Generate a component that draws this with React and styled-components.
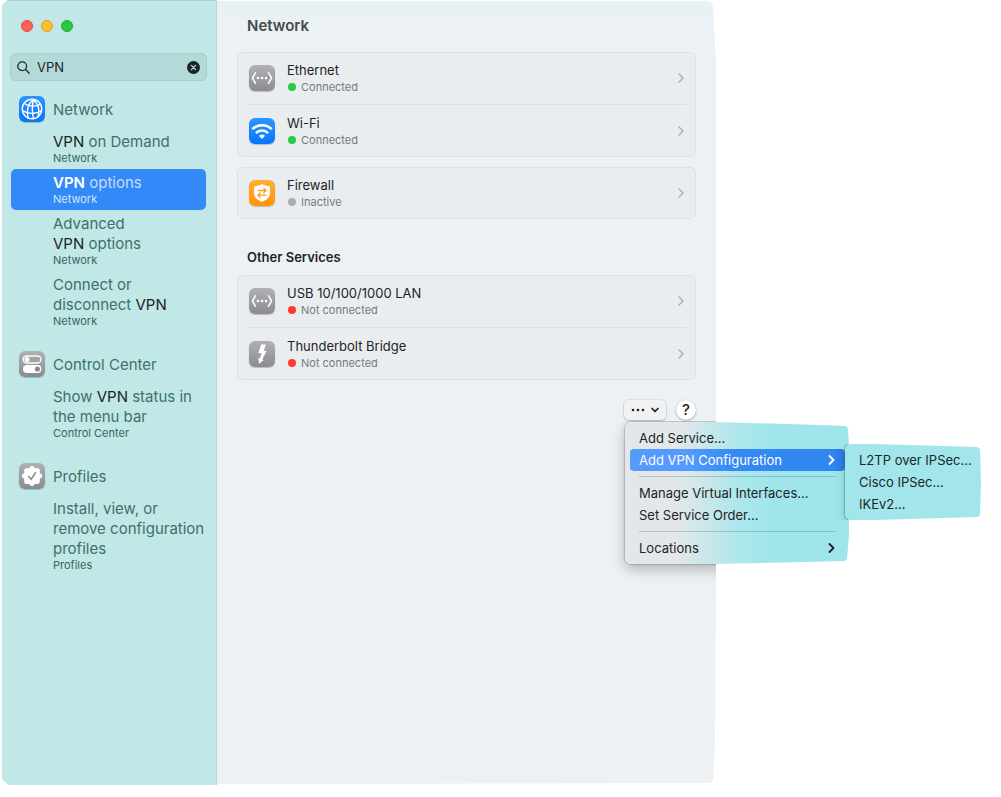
import React from "react";
import styled, { createGlobalStyle, css } from "styled-components";

const GlobalStyle = createGlobalStyle`
  *, *::before, *::after { box-sizing: border-box; }
  body {
    margin: 0;
    background: #fff;
    font-family: Inter, "Liberation Sans", sans-serif;
    font-size: 13px;
    color: #1f2325;
  }
  button, input { font: inherit; color: inherit; margin: 0; }
  ul { list-style: none; margin: 0; padding: 0; }
  h1, h2, p { margin: 0; }
`;

const Page = styled.div`
  padding: 0 284px 12px 2px;
`;

const Window = styled.div`
  display: grid;
  grid-template-columns: 215px minmax(0, 1fr);
  min-height: calc(100vh - 12px);
`;

const Sidebar = styled.aside`
  padding: 19px 10px 20px 8px;
  background: linear-gradient(#a9d3d6, #a9d3d6) 0 0 / 100% 1px no-repeat, #c1e8e6;
  box-shadow: inset -1px 0 0 #b1dcd9;
  clip-path: polygon(0 5px, 6px 0, 100% 0, 100% 100%, 6px 100%, 0 calc(100% - 6px));
`;

const Lights = styled.div`
  display: flex;
  gap: 8px;
  padding: 1px 11px 0;
`;

const Light = styled.button`
  width: 12px;
  height: 12px;
  padding: 0;
  border: 1px solid ${(p) => p.$edge};
  border-radius: 50%;
  background: ${(p) => p.$fill};
`;

const SearchBox = styled.label`
  display: flex;
  align-items: center;
  gap: 7px;
  height: 28px;
  margin: 21px 0 9px;
  padding: 0 6px;
  border: 1px solid #a6cecc;
  border-radius: 6px;
  background: #b3dad9;
`;

const SearchInput = styled.input`
  flex: 1;
  min-width: 0;
  padding: 0;
  border: 0;
  outline: 0;
  background: transparent;
`;

const ClearButton = styled.button`
  display: flex;
  padding: 0;
  border: 0;
  background: transparent;
`;

const Group = styled.section`
  & + & { margin-top: 13px; }
`;

const GroupTitle = styled.h2`
  display: flex;
  align-items: center;
  gap: 8px;
  height: 38px;
  padding-left: 9px;
  font-size: 15px;
  font-weight: 400;
  color: #40706b;
`;

const Result = styled.a`
  display: block;
  margin: 0 1px;
  padding: 4px 0 4px 42px;
  border-radius: 5px;
  font-size: 15px;
  line-height: 20px;
  white-space: nowrap;
  text-decoration: none;
  color: ${(p) => (p.$selected ? "#c7defc" : "#40706b")};
  background: ${(p) => (p.$selected ? "#3389f7" : "transparent")};
`;

const Match = styled.b`
  font-weight: ${(p) => (p.$selected ? 600 : 400)};
  color: ${(p) => (p.$selected ? "#fff" : "#1b2424")};
`;

const ResultPlace = styled.span`
  display: block;
  font-size: 11px;
  line-height: 13px;
  color: ${(p) => (p.$selected ? "#d3e5fd" : "#356661")};
`;

const Tile = styled.span`
  display: block;
  flex: none;
  width: 26px;
  height: 26px;
  border-radius: 6px;
  box-shadow: 0 1px 1px rgba(0, 0, 0, 0.2);
  background: ${(p) =>
    ({
      grey: "linear-gradient(#b1b0b5, #8c8b90)",
      blue: "linear-gradient(#2e95ff, #0577fb)",
      orange: "linear-gradient(#ffb031, #ff9404)",
    })[p.$tone]};
  svg { display: block; }
`;

const Main = styled.main`
  position: relative;
  isolation: isolate;
  padding: 0 21px 40px 20px;
  &::before {
    content: "";
    position: absolute;
    z-index: -1;
    inset: 0;
    background: linear-gradient(#e9f1f4, #edf1f4 60px);
    clip-path: polygon(
      0 1px, calc(100% - 9px) 1px, calc(100% - 5px) 3px, calc(100% - 4px) 8px,
      calc(100% - 1px) 60px, calc(100% - 1px) 75%, calc(100% - 2px) calc(100% - 40px),
      calc(100% - 4px) calc(100% - 4px), calc(100% - 8px) calc(100% - 2px), 0 calc(100% - 1px)
    );
  }
`;

const Title = styled.h1`
  padding: 0 10px;
  font-size: 15px;
  line-height: 52px;
  font-weight: 600;
  color: #45484a;
`;

const Subtitle = styled.h2`
  padding: 0 10px;
  margin: 28px 0 8px;
  font-size: 13px;
  line-height: 20px;
  font-weight: 600;
`;

const Card = styled.ul`
  padding: 0 9px;
  border: 1px solid #dce1e4;
  border-radius: 6px;
  background: #e9edf0;
  & + & { margin-top: 10px; }
`;

const CardItem = styled.li`
  & + &::before {
    content: "";
    display: block;
    height: 1px;
    margin: 1px 0;
    background: #dadfe2;
  }
`;

const ServiceButton = styled.button`
  display: flex;
  align-items: center;
  gap: 12px;
  width: 100%;
  height: 50px;
  padding: 0 0 0 2px;
  border: 0;
  background: transparent;
  text-align: left;
`;

const ServiceText = styled.span`
  display: flex;
  flex: 1;
  flex-direction: column;
  line-height: 17px;
`;

const Status = styled.span`
  display: flex;
  align-items: center;
  gap: 5px;
  padding-left: 1px;
  font-size: 11px;
  line-height: 16px;
  color: #757a7d;
  &::before {
    content: "";
    width: 8px;
    height: 8px;
    border-radius: 50%;
    background: ${(p) => ({ on: "#29cc41", idle: "#a9adb0", off: "#ff3b2f" })[p.$state]};
  }
`;

const Actions = styled.div`
  display: flex;
  justify-content: flex-end;
  gap: 10px;
  margin-top: 20px;
`;

const MenuAnchor = styled.div`
  position: relative;
`;

const MoreButton = styled.button`
  display: flex;
  align-items: center;
  justify-content: center;
  gap: 6px;
  width: 42px;
  height: 20px;
  padding: 0;
  border: 0;
  border-radius: 5px;
  background: #f1f2f3;
  box-shadow: 0 0 0 1px rgba(0, 0, 0, 0.06), 0 1px 2px rgba(0, 0, 0, 0.2);
`;

const HelpButton = styled.button`
  width: 20px;
  height: 20px;
  padding: 0;
  border: 0;
  border-radius: 50%;
  background: #fff;
  box-shadow: 0 0 1px rgba(0, 0, 0, 0.3), 0 1px 2px rgba(0, 0, 0, 0.25);
  font-size: 15px;
  line-height: 20px;
  font-weight: 500;
`;

const menuSurface = css`
  position: absolute;
  z-index: 1;
  padding: 5px;
  &::before {
    content: "";
    position: absolute;
    z-index: -1;
    inset: 0;
    border-radius: 6px;
  }
`;

const Menu = styled.ul`
  ${menuSurface}
  top: 22px;
  left: 1px;
  width: 225px;
  &::before {
    background: linear-gradient(90deg, #e3e7e9 0, #e3e7e9 52px, #a9e7eb 118px, #a0e5eb 150px, #a0e5eb);
    clip-path: polygon(
      0 0, 91px 0, calc(100% - 30px) 3px, calc(100% - 4px) 4px, calc(100% - 2px) 6px, calc(100% - 1px) 24px,
      calc(100% - 1px) 112px, calc(100% - 3px) calc(100% - 5px), calc(100% - 5px) calc(100% - 3px), 91px 100%, 0 100%
    );
  }
  &::after {
    content: "";
    position: absolute;
    z-index: -2;
    inset: 0;
    border-radius: 6px;
    box-shadow: 0 0 1px 1px rgba(0, 0, 0, 0.16), 0 5px 14px rgba(0, 0, 0, 0.26);
    clip-path: inset(-1px calc(100% - 91px) -30px -30px);
  }
`;

const Submenu = styled.ul`
  ${menuSurface}
  top: -5px;
  left: 100%;
  width: 136px;
  color: #1b2628;
  &::before {
    background: #a2e6eb;
    clip-path: polygon(
      0 0, 30px 0, calc(100% - 4px) 3px, calc(100% - 1px) 5px, 100% 50%,
      calc(100% - 1px) calc(100% - 5px), calc(100% - 3px) calc(100% - 3px), 30px 100%, 0 100%
    );
  }
  &::after {
    content: "";
    position: absolute;
    z-index: -2;
    inset: 0;
    border-radius: 6px;
    box-shadow: 0 0 1px 1px rgba(20, 90, 100, 0.3), 0 3px 10px rgba(20, 90, 100, 0.3);
    clip-path: inset(0 calc(100% - 4px) 0 -12px);
  }
`;

const MenuEntry = styled.li`
  position: relative;
`;

const MenuButton = styled.button`
  display: flex;
  align-items: center;
  justify-content: space-between;
  width: 100%;
  height: 22px;
  padding: 0 9px;
  border: 0;
  border-radius: 4px;
  text-align: left;
  white-space: nowrap;
  color: ${(p) => (p.$active ? "#fff" : "inherit")};
  background: ${(p) =>
    p.$active ? "linear-gradient(90deg, #559bff 0, #559bff 55px, #3489f5 105px, #3187f0 200px, #2c78e2)" : "transparent"};
`;

const MenuLine = styled.li`
  height: 1px;
  margin: 5px 9px;
  background: rgba(60, 90, 100, 0.25);
`;

const Stroke = ({ size = 26, width = 2, box = 26, color = "#fff", children }) => (
  <svg
    width={size} height={size} viewBox={`0 0 ${box} ${box}`} fill="none" stroke={color}
    strokeWidth={width} strokeLinecap="round" strokeLinejoin="round" aria-hidden="true"
  >
    {children}
  </svg>
);

const sealLobes = Array.from({ length: 8 }, (_, i) => i * 45);

const icons = {
  globe: (
    <Stroke width={1.4}>
      <circle cx="13" cy="13" r="9.8" />
      <path d="M14.500 3.500C9 7.500 7 15 9.200 22M14.500 3.500C13 10 13 17 14.500 22.700M14.500 3.500C19.500 8 21 15 18.800 21" />
      <path d="M5.200 7.500c4.600 3.200 11.600 3.600 16 .6M3.400 14.300c5.400 4.200 13.600 4.200 19.200 0" />
    </Stroke>
  ),
  switches: (
    <Stroke width={1.3}>
      <rect x="4.2" y="5" width="17.8" height="7" rx="3.5" fill="#a3a2a7" />
      <circle cx="8" cy="8.5" r="2.5" fill="#fff" stroke="none" />
      <rect x="4" y="14" width="18.4" height="8" rx="4" fill="#fff" stroke="none" />
      <circle cx="18.4" cy="18" r="2.6" fill="#8c8b90" stroke="none" />
    </Stroke>
  ),
  seal: (
    <Stroke width={1.6}>
      <g fill="#fff" stroke="none">
        <circle cx="13" cy="13" r="8.6" />
        {sealLobes.map((angle) => (
          <circle key={angle} cx="13" cy="5.400" r="2.500" transform={`rotate(${angle} 13 13)`} />
        ))}
      </g>
      <path d="M9.700 13.400l2.500 2.900 4.200-6.500" stroke="#8e8d92" />
    </Stroke>
  ),
  ethernet: (
    <Stroke width={1.5}>
      <path d="M6.600 7.700L3.400 13l3.200 5.300M19.400 7.700l3.200 5.300-3.200 5.300" />
      <g fill="#fff" stroke="none">
        <circle cx="8.900" cy="13" r="1.300" />
        <circle cx="13" cy="13" r="1.300" />
        <circle cx="17.100" cy="13" r="1.300" />
      </g>
    </Stroke>
  ),
  wifi: (
    <Stroke width={2.5}>
      <g strokeLinecap="butt">
        <path d="M3.200 11.200a14 14 0 0 1 19.600 0M6.900 15.100a8.700 8.700 0 0 1 12.200 0" />
      </g>
      <path d="M10 17.800a4.400 4.400 0 0 1 6 0l-3 3.100z" fill="#fff" stroke="none" />
    </Stroke>
  ),
  shield: (
    <Stroke width={1.3}>
      <path
        d="M13 4c2.400 1.400 4.700 2 7 2.200.6.1.9.4.9 1v6.600c0 3.800-3.500 6-7.900 8.200-4.400-2.200-7.900-4.400-7.900-8.200V7.200c0-.6.300-.9.900-1C8.300 6 10.600 5.400 13 4z"
        fill="#fff" stroke="none"
      />
      <path d="M9 10.500h8M14.800 8.300l2.200 2.200-2.200 2.200M17 15.200H9M11.200 13L9 15.200l2.200 2.200" stroke="#ff9d18" />
    </Stroke>
  ),
  bolt: (
    <Stroke width={1}>
      <path
        d="M12.200 3.500h4.600l-2 6.300h2.800l-4.300 8.600 1.400.6-4.600 3.800-.9-5.800 1.500.6 2-5.300H9.300z"
        fill="#fff" stroke="none"
      />
    </Stroke>
  ),
};

const AppIcon = ({ tone, name }) => <Tile $tone={tone}>{icons[name]}</Tile>;

const RowChevron = () => (
  <Stroke size={10} box={10} width={1.4} color="#a8adb0">
    <path d="M3 1l4 4-4 4" />
  </Stroke>
);

const MenuChevron = ({ color = "#1f2325" }) => (
  <Stroke size={10} box={10} width={1.8} color={color}>
    <path d="M3.500 1l4 4-4 4" />
  </Stroke>
);

const groups = [
  {
    title: "Network", tone: "blue", icon: "globe",
    results: [
      { lines: ["*VPN* on Demand"] },
      { lines: ["*VPN* options"], selected: true },
      { lines: ["Advanced", "*VPN* options"] },
      { lines: ["Connect or", "disconnect *VPN*"] },
    ],
  },
  {
    title: "Control Center", tone: "grey", icon: "switches",
    results: [{ lines: ["Show *VPN* status in", "the menu bar"] }],
  },
  {
    title: "Profiles", tone: "grey", icon: "seal",
    results: [{ lines: ["Install, view, or", "remove configuration", "profiles"] }],
  },
];

const mainServices = [
  { name: "Ethernet", state: "on", label: "Connected", tone: "grey", icon: "ethernet" },
  { name: "Wi-Fi", state: "on", label: "Connected", tone: "blue", icon: "wifi" },
];
const firewall = [{ name: "Firewall", state: "idle", label: "Inactive", tone: "orange", icon: "shield" }];
const otherServices = [
  { name: "USB 10/100/1000 LAN", state: "off", label: "Not connected", tone: "grey", icon: "ethernet" },
  { name: "Thunderbolt Bridge", state: "off", label: "Not connected", tone: "grey", icon: "bolt" },
];

const Highlighted = ({ text, selected }) =>
  text.split("*").map((part, i) => (i % 2 ? <Match key={i} $selected={selected}>{part}</Match> : part));

const ServiceCard = ({ services }) => (
  <Card>
    {services.map((s) => (
      <CardItem key={s.name}>
        <ServiceButton type="button">
          <AppIcon tone={s.tone} name={s.icon} />
          <ServiceText>
            {s.name}
            <Status $state={s.state}>{s.label}</Status>
          </ServiceText>
          <RowChevron />
        </ServiceButton>
      </CardItem>
    ))}
  </Card>
);

const MenuItem = ({ children, active, chevron, submenu }) => (
  <MenuEntry role="none">
    <MenuButton type="button" role="menuitem" $active={active}>
      {children}
      {chevron && <MenuChevron color={active ? "#fff" : undefined} />}
    </MenuButton>
    {submenu}
  </MenuEntry>
);

export default function App() {
  return (
    <Page>
      <GlobalStyle />
      <Window>
        <Sidebar>
          <Lights>
            <Light type="button" aria-label="Close" $fill="#ff5f57" $edge="#e2463f" />
            <Light type="button" aria-label="Minimize" $fill="#febc2e" $edge="#dfa023" />
            <Light type="button" aria-label="Zoom" $fill="#28c840" $edge="#1dab2e" />
          </Lights>
          <SearchBox>
            <Stroke size={13} box={13} width={1.3} color="#1f2b2b">
              <circle cx="5.2" cy="5.2" r="4.4" />
              <path d="M8.500 8.500l3.700 3.700" />
            </Stroke>
            <SearchInput type="text" aria-label="Search" defaultValue="VPN" />
            <ClearButton type="button" aria-label="Clear search">
              <Stroke size={13} box={13} width={1.3} color="#b3dad9">
                <circle cx="6.5" cy="6.5" r="6.5" fill="#1b2424" stroke="none" />
                <path d="M4.400 4.400l4.200 4.200M8.600 4.400L4.400 8.600" />
              </Stroke>
            </ClearButton>
          </SearchBox>
          <nav aria-label="Search results">
            {groups.map((g) => (
              <Group key={g.title}>
                <GroupTitle>
                  <AppIcon tone={g.tone} name={g.icon} />
                  {g.title}
                </GroupTitle>
                {g.results.map((r) => (
                  <Result key={r.lines.join(" ")} href="#" $selected={r.selected}>
                    {r.lines.map((line, i) => (
                      <React.Fragment key={line}>
                        {i > 0 && <br />}
                        <Highlighted text={line} selected={r.selected} />
                      </React.Fragment>
                    ))}
                    <ResultPlace $selected={r.selected}>{g.title}</ResultPlace>
                  </Result>
                ))}
              </Group>
            ))}
          </nav>
        </Sidebar>
        <Main>
          <Title>Network</Title>
          <ServiceCard services={mainServices} />
          <ServiceCard services={firewall} />
          <Subtitle>Other Services</Subtitle>
          <ServiceCard services={otherServices} />
          <Actions>
            <MenuAnchor>
              <MoreButton type="button" aria-label="More actions" aria-expanded="true">
                <svg width="14" height="4" viewBox="0 0 14 4" fill="#1f2325" aria-hidden="true">
                  <circle cx="2" cy="2" r="1.3" />
                  <circle cx="7" cy="2" r="1.3" />
                  <circle cx="12" cy="2" r="1.3" />
                </svg>
                <Stroke size={8} box={8} width={1.7} color="#1f2325">
                  <path d="M1 2.500l3 3 3-3" />
                </Stroke>
              </MoreButton>
              <Menu role="menu">
                <MenuItem>Add Service…</MenuItem>
                <MenuItem
                  active
                  chevron
                  submenu={
                    <Submenu role="menu">
                      <MenuItem>L2TP over IPSec…</MenuItem>
                      <MenuItem>Cisco IPSec…</MenuItem>
                      <MenuItem>IKEv2…</MenuItem>
                    </Submenu>
                  }
                >
                  Add VPN Configuration
                </MenuItem>
                <MenuLine role="separator" />
                <MenuItem>Manage Virtual Interfaces…</MenuItem>
                <MenuItem>Set Service Order…</MenuItem>
                <MenuLine role="separator" />
                <MenuItem chevron>Locations</MenuItem>
              </Menu>
            </MenuAnchor>
            <HelpButton type="button" aria-label="Help">?</HelpButton>
          </Actions>
        </Main>
      </Window>
    </Page>
  );
}
